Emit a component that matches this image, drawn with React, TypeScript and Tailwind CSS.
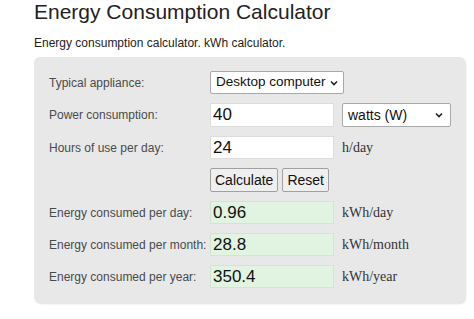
import { useState } from 'react';

const rows = [
    { label: 'Energy consumed per day:', value: '0.96', unit: 'kWh/day' },
    { label: 'Energy consumed per month:', value: '28.8', unit: 'kWh/month' },
    { label: 'Energy consumed per year:', value: '350.4', unit: 'kWh/year' },
];

function Chevron() {
    return (
        <svg width="8" height="6" viewBox="0 0 8 6" className="shrink-0">
            <path d="M1 1.5 L4 4.5 L7 1.5" fill="none" stroke="#222" strokeWidth="1.6" />
        </svg>
    );
}

export default function App() {
    const [power, setPower] = useState('40');
    const [hours, setHours] = useState('24');

    return (
        <div className="w-[474px] h-[319px] bg-white overflow-hidden font-['Liberation_Sans',Arial,sans-serif] text-[#222]">
            <div className="pl-[34px] pr-[10px]">
                <h1 className="text-[21px] leading-[24px] pt-[0px] text-[#222]">Energy Consumption Calculator</h1>
                <p className="mt-[12px] text-[12px] leading-[14px] text-[#222]">Energy consumption calculator. kWh calculator.</p>

                <div className="mt-[7px] w-[431px] h-[246px] rounded-[6px] bg-[#e8e8e8] shadow-[1px_1px_2px_rgba(0,0,0,0.12)] pl-[15px] pt-[14px]">
                    <div className="grid grid-cols-[161px_124px_1fr] items-center gap-y-[9px] whitespace-nowrap text-[12px] text-[#4a4a4a]">
                        <span>Typical appliance:</span>
                        <div className="col-span-2">
                            <div className="inline-flex h-[23px] w-[134px] items-center justify-between border border-[#a9a9a9] bg-white pl-[5px] pr-[5px] rounded-[2px] text-[13.5px] text-[#111]">
                                <span>Desktop computer</span>
                                <Chevron />
                            </div>
                        </div>

                        <span>Power consumption:</span>
                        <input
                            value={power}
                            onChange={(e) => setPower(e.target.value)}
                            className="h-[24px] w-[124px] border border-[#dcdcdc] bg-white px-[2px] text-[17px] text-[#111] outline-none"
                        />
                        <div className="pl-[8px]">
                            <div className="flex h-[24px] w-[109px] items-center justify-between border border-[#a9a9a9] bg-white pl-[5px] pr-[7px] rounded-[2px] text-[14px] text-[#111]">
                                <span>watts (W)</span>
                                <Chevron />
                            </div>
                        </div>

                        <span>Hours of use per day:</span>
                        <input
                            value={hours}
                            onChange={(e) => setHours(e.target.value)}
                            className="h-[23px] w-[124px] border border-[#dcdcdc] bg-white px-[2px] text-[17px] text-[#111] outline-none"
                        />
                        <span className="pl-[8px] font-['Liberation_Serif',serif] text-[14px] text-[#333]">h/day</span>

                        <span></span>
                        <div className="col-span-2 flex gap-[4px]">
                            <button className="h-[24px] border border-[#a0a0a0] bg-[#efefef] px-[4px] rounded-[2px] text-[14px] text-[#111]">Calculate</button>
                            <button className="h-[24px] border border-[#a0a0a0] bg-[#efefef] px-[4px] rounded-[2px] text-[14px] text-[#111]">Reset</button>
                        </div>

                        {rows.map((r) => (
                            <div key={r.label} className="contents">
                                <span>{r.label}</span>
                                <div className="flex h-[23px] w-[124px] items-center border border-[#d4e4d4] bg-[#e1f3e1] px-[2px] text-[17px] text-[#111]">
                                    {r.value}
                                </div>
                                <span className="pl-[8px] font-['Liberation_Serif',serif] text-[14px] text-[#333]">{r.unit}</span>
                            </div>
                        ))}
                    </div>
                </div>
            </div>
        </div>
    );
}
